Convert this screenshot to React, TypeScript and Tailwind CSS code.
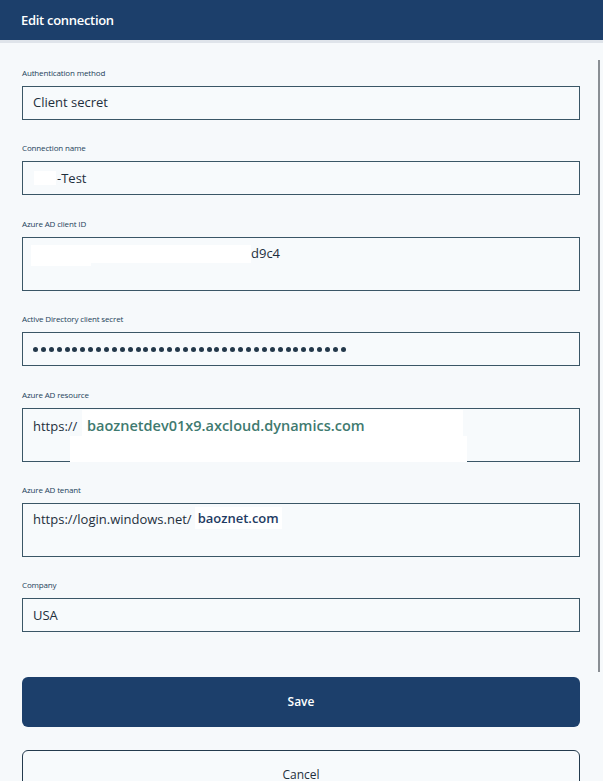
import React from "react";

const font = { fontFamily: '"Open Sans", "Noto Sans", sans-serif' };

function Label({ children }: { children: React.ReactNode }) {
  return (
    <div className="text-[8px] leading-[12px] text-[#24425a] tracking-[-0.15px] mb-[7px]">
      {children}
    </div>
  );
}

function Box({ tall, children }: { tall?: boolean; children: React.ReactNode }) {
  return (
    <div
      className={`relative border border-[#3a5666] bg-[#f7fafc] px-[10px] text-[13px] font-medium text-[#1e2f3c] ${
        tall ? "h-[54px] pt-[6px]" : "h-[34px] flex items-center"
      }`}
    >
      {children}
    </div>
  );
}

export default function App() {
  return (
    <div className="w-[603px] h-[781px] overflow-hidden bg-[#f6f9fb] relative" style={font}>
      <div className="h-[40px] bg-[#1c3f6b] flex items-center px-[21px] pt-[2px]">
        <span className="text-white text-[13px] font-semibold tracking-[-0.3px]">Edit connection</span>
      </div>
      <div className="h-[3px] bg-[#dfe4ea]" />

      {/* scrollbar */}
      <div className="absolute right-[3px] top-[60px] w-[2px] h-[612px] bg-[#8a8f94]" />

      <div className="pl-[22px] pr-[23px] pt-[24px]">
        <div className="flex flex-col gap-[22.4px]">
          <div>
            <Label>Authentication method</Label>
            <Box>Client secret</Box>
          </div>
          <div>
            <Label>Connection name</Label>
            <Box>
              <span className="inline-block w-[22px] h-[14px] bg-white mr-[1px] ml-[1px]" />
              <span>-Test</span>
            </Box>
          </div>
          <div>
            <Label>Azure AD client ID</Label>
            <Box tall>
              <div className="flex items-center">
                <span className="inline-block w-[220px] h-[18px] bg-white -ml-[2px]" />
                <span>d9c4</span>
              </div>
              <span className="absolute left-[8px] top-[24px] w-[60px] h-[4px] bg-white" />
            </Box>
          </div>
          <div>
            <Label>Active Directory client secret</Label>
            <Box>
              <div className="flex gap-[2.9px] items-center">
                {Array.from({ length: 40 }).map((_, i) => (
                  <span key={i} className="w-[5px] h-[5px] rounded-full bg-[#23384a]" />
                ))}
              </div>
            </Box>
          </div>
          <div>
            <Label>Azure AD resource</Label>
            <Box tall>
              <div className="flex items-start">
                <span className="mt-[2px] text-[13px]">https://</span>
              </div>
              <span className="absolute left-[59px] top-[1px] w-[381px] h-[27px] bg-white" />
              <span className="absolute left-[47px] top-[27px] w-[397px] h-[26px] bg-white" />
              <span className="absolute left-[64px] top-[6px] text-[14.5px] font-semibold text-[#3f7a70]">
                baoznetdev01x9.axcloud.dynamics.com
              </span>
            </Box>
          </div>
          <div>
            <Label>Azure AD tenant</Label>
            <Box tall>
              <div className="flex items-center">
                <span>https://login.windows.net/</span>
                <span className="ml-[3px] px-[3px] bg-white text-[13px] font-semibold text-[#1f3b63] -mt-[3px] leading-[22px]">
                  baoznet.com
                </span>
              </div>
            </Box>
          </div>
          <div>
            <Label>Company</Label>
            <Box>USA</Box>
          </div>
        </div>

        <button className="mt-[45px] w-full h-[50px] rounded-[6px] bg-[#1c3f6b] text-white text-[12px] font-semibold">
          Save
        </button>
        <button className="mt-[23px] w-full h-[50px] rounded-[6px] border border-[#233a4d] bg-[#f7fafc] text-[#1e2f3c] text-[12px] font-medium">
          Cancel
        </button>
      </div>
    </div>
  );
}
